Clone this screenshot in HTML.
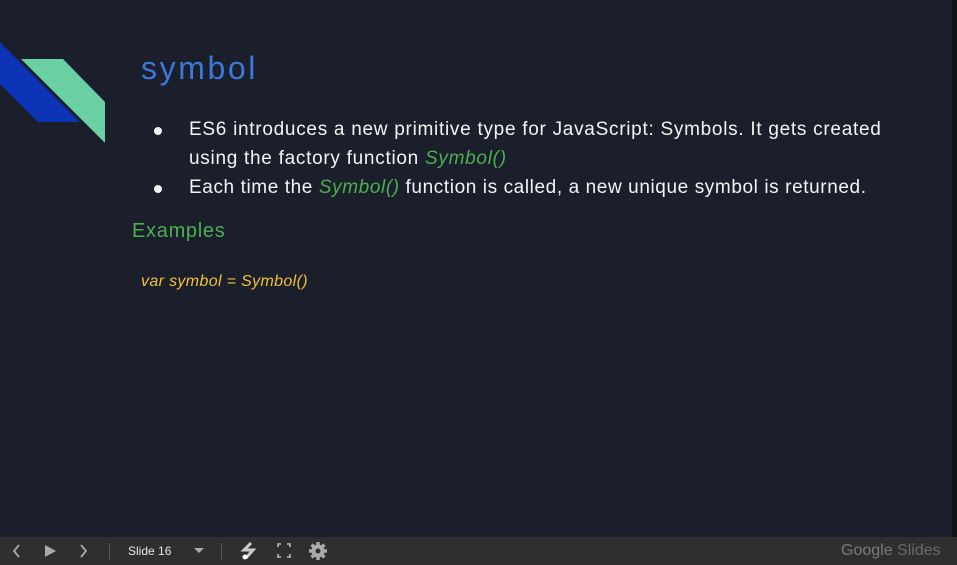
<!DOCTYPE html>
<html><head><meta charset="utf-8"><style>
html,body{margin:0;padding:0;width:957px;height:565px;overflow:hidden;background:#1b1f2c;font-family:"Liberation Sans",sans-serif}
.slide{position:absolute;left:0;top:0;width:952px;height:537px;background:#1b1f2c}
.edge{position:absolute;left:952px;top:0;width:5px;height:537px;background:#111318}
.t{position:absolute;white-space:nowrap}
.title{left:141px;top:50px;font-size:32px;color:#3c78d8;letter-spacing:2.6px}
.b{font-size:19px;color:#f3f3f3;left:189px;letter-spacing:0.72px}
.dot{position:absolute;left:154px;width:8px;height:8px;border-radius:50%;background:#f3f3f3}
.g{color:#4caf50;font-style:italic}
.bar{position:absolute;left:0;top:537px;width:957px;height:28px;background:#2f2f2f}
.bar .tx{position:absolute;color:#e8e8e8;font-size:12px;top:7px}
.sep{position:absolute;top:6px;width:1px;height:17px;background:#555}
</style></head><body>
<div class="slide"></div><div class="edge"></div>
<svg style="position:absolute;left:0;top:0" width="120" height="150">
<polygon points="0,42 80,122 38,122 0,84" fill="#0c33b5"/>
<polygon points="21,59 63,59 105,102 105,143" fill="#6acfa2"/>
</svg>
<div class="t title">symbol</div>
<div class="dot" style="top:127px"></div>
<div class="t b" style="top:119px">ES6 introduces a new primitive type for JavaScript: Symbols. It gets created</div>
<div class="t b" style="top:148px">using the factory function <span class="g">Symbol()</span></div>
<div class="dot" style="top:185px"></div>
<div class="t b" style="top:177px;letter-spacing:0.6px">Each time the <span class="g">Symbol()</span> function is called, a new unique symbol is returned.</div>
<div class="t" style="left:132px;top:220px;font-size:20px;color:#4caf50;letter-spacing:0.7px">Examples</div>
<div class="t" style="left:141px;top:273px;font-size:16px;color:#f1c232;font-style:italic;letter-spacing:0.35px">var symbol = Symbol()</div>
<div class="bar">
<svg style="position:absolute;left:0;top:0" width="340" height="28">
<path d="M19 8 L14 14 L19 20" stroke="#aaa" stroke-width="1.8" fill="none"/>
<polygon points="45,8 45,20 56,14" fill="#aaa"/>
<path d="M81 8 L86 14 L81 20" stroke="#aaa" stroke-width="1.8" fill="none"/>
<polygon points="194,11 204,11 199,16" fill="#aaa"/>
<path d="M251 6 L244 13 L253 13 L246 21" stroke="#ccc" stroke-width="3" fill="none"/>
<circle cx="245" cy="20" r="2.5" fill="#fff"/>
<path d="M278 10 V7 H281 M287 7 H290 V10 M290 17 V20 H287 M281 20 H278 V17" stroke="#aaa" stroke-width="1.8" fill="none"/>
<g transform="translate(318,14)" fill="#aaa"><circle r="6.5"/><g stroke="#aaa" stroke-width="3.5"><line x1="0" y1="-9" x2="0" y2="9"/><line x1="-9" y1="0" x2="9" y2="0"/><line x1="-6.4" y1="-6.4" x2="6.4" y2="6.4"/><line x1="-6.4" y1="6.4" x2="6.4" y2="-6.4"/></g><circle r="2.5" fill="#2f2f2f"/></g>
</svg>
<div class="sep" style="left:109px"></div>
<div class="tx" style="left:128px">Slide 16</div>
<div class="sep" style="left:221px"></div>
<div class="tx" style="left:841px;top:5px;font-size:16px;color:#7a7a7a">Google <span style="color:#6a6a6a">Slides</span></div>
</div>
</body></html>
